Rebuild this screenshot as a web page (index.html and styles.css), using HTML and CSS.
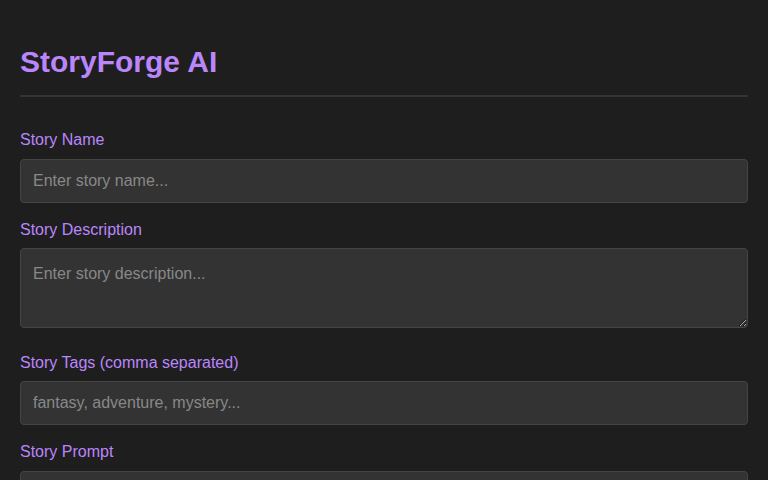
FILE: index.html
```html
<!DOCTYPE html>
<html lang="en">
<head>
<meta charset="utf-8">
<title>StoryForge AI</title>
<link rel="stylesheet" href="styles.css">
</head>
<body>
<div class="container">
  <h1 class="title">StoryForge AI</h1>
  <div class="form-group">
    <label class="label" for="name">Story Name</label>
    <input class="field" id="name" type="text" placeholder="Enter story name...">
  </div>
  <div class="form-group">
    <label class="label" for="desc">Story Description</label>
    <textarea class="field area" id="desc" placeholder="Enter story description..."></textarea>
  </div>
  <div class="form-group">
    <label class="label" for="tags">Story Tags (comma separated)</label>
    <input class="field" id="tags" type="text" placeholder="fantasy, adventure, mystery...">
  </div>
  <div class="form-group">
    <label class="label" for="prompt">Story Prompt</label>
    <textarea class="field area" id="prompt" placeholder="Enter story prompt..."></textarea>
  </div>
</div>
</body>
</html>
```

FILE: styles.css
```css
html, body {
  margin: 0;
  background: #1e1e1e;
  font-family: "Liberation Sans", Arial, sans-serif;
  line-height: 1.6;
  color: #e0e0e0;
}
.container {
  padding: 20px;
}
.title {
  margin: 18px 0 30px;
  padding-bottom: 9px;
  border-bottom: 2px solid #333;
  font-size: 30px;
  font-weight: bold;
  color: #bb86fc;
}
.form-group {
  margin-bottom: 14px;
}
.label {
  display: block;
  margin-bottom: 6px;
  font-size: 16px;
  color: #bb86fc;
}
.field {
  box-sizing: border-box;
  width: 100%;
  padding: 12px;
  background: #333;
  border: 1px solid #444;
  border-radius: 4px;
  color: #fff;
  font-family: "Liberation Sans", Arial, sans-serif;
  font-size: 16px;
  outline: none;
}
.field::placeholder {
  color: #888;
}
.area {
  height: 80px;
  line-height: 1.6;
  resize: vertical;
}
```
